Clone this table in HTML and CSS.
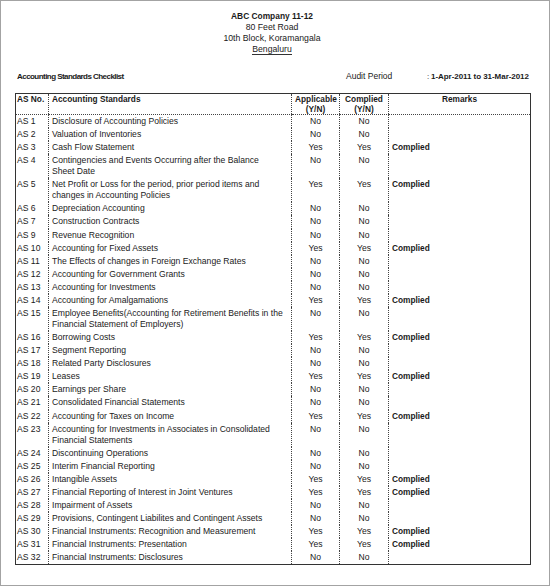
FILE: index.html
```html
<!DOCTYPE html>
<html>
<head>
<meta charset="utf-8">
<link rel="stylesheet" href="styles.css">
</head>
<body>
<div class="frame">
  <div class="company">
    <div class="name">ABC Company 11-12</div>
    <div>80 Feet Road</div>
    <div>10th Block, Koramangala</div>
    <div><span class="city">Bengaluru</span></div>
  </div>
  <div class="meta">
    <div class="report-title">Accounting Standards Checklist</div>
    <div class="period-label">Audit Period</div>
    <div class="colon">:</div>
    <div class="period">1-Apr-2011 to 31-Mar-2012</div>
  </div>
  <table class="checklist">
    <colgroup>
      <col class="c-no"><col class="c-std"><col class="c-app"><col class="c-comp"><col class="c-rem">
    </colgroup>
    <thead>
      <tr>
        <th class="left">AS No.</th>
        <th class="left">Accounting Standards</th>
        <th>Applicable<br>(Y/N)</th>
        <th>Complied<br>(Y/N)</th>
        <th>Remarks</th>
      </tr>
    </thead>
    <tbody>
      <tr><td>AS 1</td><td>Disclosure of Accounting Policies</td><td class="yn">No</td><td class="yn">No</td><td class="rem"></td></tr>
      <tr><td>AS 2</td><td>Valuation of Inventories</td><td class="yn">No</td><td class="yn">No</td><td class="rem"></td></tr>
      <tr><td>AS 3</td><td>Cash Flow Statement</td><td class="yn">Yes</td><td class="yn">Yes</td><td class="rem">Complied</td></tr>
      <tr><td>AS 4</td><td>Contingencies and Events Occurring after the Balance<br>Sheet Date</td><td class="yn">No</td><td class="yn">No</td><td class="rem"></td></tr>
      <tr class="mid"><td>AS 5</td><td>Net Profit or Loss for the period, prior period items and<br>changes in Accounting Policies</td><td class="yn">Yes</td><td class="yn">Yes</td><td class="rem">Complied</td></tr>
      <tr><td>AS 6</td><td>Depreciation Accounting</td><td class="yn">No</td><td class="yn">No</td><td class="rem"></td></tr>
      <tr><td>AS 7</td><td>Construction Contracts</td><td class="yn">No</td><td class="yn">No</td><td class="rem"></td></tr>
      <tr><td>AS 9</td><td>Revenue Recognition</td><td class="yn">No</td><td class="yn">No</td><td class="rem"></td></tr>
      <tr><td>AS 10</td><td>Accounting for Fixed Assets</td><td class="yn">Yes</td><td class="yn">Yes</td><td class="rem">Complied</td></tr>
      <tr><td>AS 11</td><td>The Effects of changes in Foreign Exchange Rates</td><td class="yn">No</td><td class="yn">No</td><td class="rem"></td></tr>
      <tr><td>AS 12</td><td>Accounting for Government Grants</td><td class="yn">No</td><td class="yn">No</td><td class="rem"></td></tr>
      <tr><td>AS 13</td><td>Accounting for Investments</td><td class="yn">No</td><td class="yn">No</td><td class="rem"></td></tr>
      <tr><td>AS 14</td><td>Accounting for Amalgamations</td><td class="yn">Yes</td><td class="yn">Yes</td><td class="rem">Complied</td></tr>
      <tr><td>AS 15</td><td>Employee Benefits(Accounting for Retirement Benefits in the<br>Financial Statement of Employers)</td><td class="yn">No</td><td class="yn">No</td><td class="rem"></td></tr>
      <tr><td>AS 16</td><td>Borrowing Costs</td><td class="yn">Yes</td><td class="yn">Yes</td><td class="rem">Complied</td></tr>
      <tr><td>AS 17</td><td>Segment Reporting</td><td class="yn">No</td><td class="yn">No</td><td class="rem"></td></tr>
      <tr><td>AS 18</td><td>Related Party Disclosures</td><td class="yn">No</td><td class="yn">No</td><td class="rem"></td></tr>
      <tr><td>AS 19</td><td>Leases</td><td class="yn">Yes</td><td class="yn">Yes</td><td class="rem">Complied</td></tr>
      <tr><td>AS 20</td><td>Earnings per Share</td><td class="yn">No</td><td class="yn">No</td><td class="rem"></td></tr>
      <tr><td>AS 21</td><td>Consolidated Financial Statements</td><td class="yn">No</td><td class="yn">No</td><td class="rem"></td></tr>
      <tr><td>AS 22</td><td>Accounting for Taxes on Income</td><td class="yn">Yes</td><td class="yn">Yes</td><td class="rem">Complied</td></tr>
      <tr><td>AS 23</td><td>Accounting for Investments in Associates in Consolidated<br>Financial Statements</td><td class="yn">No</td><td class="yn">No</td><td class="rem"></td></tr>
      <tr><td>AS 24</td><td>Discontinuing Operations</td><td class="yn">No</td><td class="yn">No</td><td class="rem"></td></tr>
      <tr><td>AS 25</td><td>Interim Financial Reporting</td><td class="yn">No</td><td class="yn">No</td><td class="rem"></td></tr>
      <tr><td>AS 26</td><td>Intangible Assets</td><td class="yn">Yes</td><td class="yn">Yes</td><td class="rem">Complied</td></tr>
      <tr><td>AS 27</td><td>Financial Reporting of Interest in Joint Ventures</td><td class="yn">Yes</td><td class="yn">Yes</td><td class="rem">Complied</td></tr>
      <tr><td>AS 28</td><td>Impairment of Assets</td><td class="yn">No</td><td class="yn">No</td><td class="rem"></td></tr>
      <tr><td>AS 29</td><td>Provisions, Contingent Liabilites and Contingent Assets</td><td class="yn">No</td><td class="yn">No</td><td class="rem"></td></tr>
      <tr><td>AS 30</td><td>Financial Instruments: Recognition and Measurement</td><td class="yn">Yes</td><td class="yn">Yes</td><td class="rem">Complied</td></tr>
      <tr><td>AS 31</td><td>Financial Instruments: Presentation</td><td class="yn">Yes</td><td class="yn">Yes</td><td class="rem">Complied</td></tr>
      <tr><td>AS 32</td><td>Financial Instruments: Disclosures</td><td class="yn">No</td><td class="yn">No</td><td class="rem"></td></tr>
    </tbody>
  </table>
</div>
</body>
</html>
```

FILE: styles.css
```css
html, body {
  margin: 0;
  padding: 0;
  background: #ffffff;
}

body {
  font-family: "Liberation Sans", Arial, sans-serif;
  color: #1a1a1a;
}

.frame {
  width: 550px;
  height: 586px;
  box-sizing: border-box;
  border: 1px solid #a3a3a3;
  padding: 10px 0 0 14px;
}

.company {
  width: 514px;
  text-align: center;
  font-size: 8.7px;
  line-height: 11px;
}

.company .name {
  font-weight: bold;
  font-size: 8.4px;
}

.city {
  display: inline-block;
  line-height: 10px;
  border-bottom: 1px solid #333;
}

.meta {
  display: flex;
  align-items: center;
  width: 514px;
  margin-top: 15px;
  height: 12px;
  font-size: 8px;
}

.report-title {
  font-weight: bold;
  letter-spacing: -0.55px;
  padding-left: 2px;
  width: 329px;
}

.period-label {
  font-size: 8.5px;
  width: 81px;
}

.colon {
  width: 4px;
}

.period {
  font-weight: bold;
  letter-spacing: -0.05px;
  white-space: nowrap;
}

.checklist {
  margin-top: 11px;
  width: 515px;
  border-collapse: collapse;
  table-layout: fixed;
  border: 1px solid #333;
  font-size: 8.6px;
}

.c-no { width: 33px; }
.c-std { width: 243px; }
.c-app { width: 48px; }
.c-comp { width: 49px; }
.c-rem { width: 142px; }

.checklist th,
.checklist td {
  padding: 1px 3px 1.08px;
  line-height: 11px;
  vertical-align: top;
  border-left: 1px dotted #444;
  white-space: nowrap;
}

.checklist th {
  font-weight: bold;
  font-size: 8.3px;
  line-height: 10px;
  text-align: center;
  padding-top: 0;
  padding-bottom: 0;
  height: 20px;
  border-bottom: 1px dotted #444;
}

.checklist th.left {
  text-align: left;
}

.checklist td:first-child,
.checklist th:first-child {
  padding-left: 1px;
  border-left: none;
}

.checklist td.yn {
  text-align: center;
}

.checklist td.rem {
  font-weight: bold;
  font-size: 8.3px;
}
```
